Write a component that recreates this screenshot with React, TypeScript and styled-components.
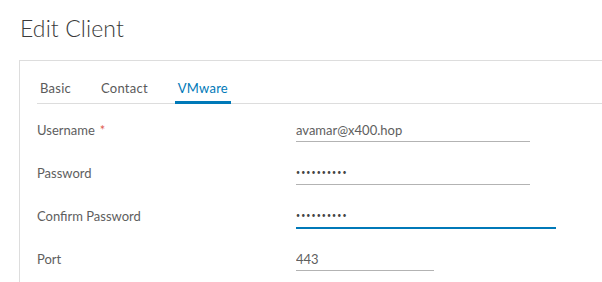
import React from 'react'
import styled, { createGlobalStyle } from 'styled-components'

const GlobalStyle = createGlobalStyle`
  html,
  body {
    margin: 0;
    padding: 0;
    background: #fff;
    overflow: hidden;
  }
  body {
    font-family: Lato, 'Open Sans', sans-serif;
    color: #565656;
  }
`

type Field = {
  label: string
  value: string
  type: 'text' | 'password'
  width: number
  required?: boolean
  focused?: boolean
}

const fields: Field[] = [
  { label: 'Username', value: 'avamar@x400.hop', type: 'text', width: 234, required: true },
  { label: 'Password', value: 'abcdefghij', type: 'password', width: 234 },
  { label: 'Confirm Password', value: 'abcdefghij', type: 'password', width: 260, focused: true },
  { label: 'Port', value: '443', type: 'text', width: 138 },
]

const tabs = ['Basic', 'Contact', 'VMware']

export default function App() {
  return (
    <SPage>
      <GlobalStyle />
      <STitle>Edit Client</STitle>
      <SCard>
        <STabBar>
          {tabs.map((tab) => (
            <STab key={tab} $active={tab === 'VMware'}>
              {tab}
            </STab>
          ))}
        </STabBar>
        <SForm>
          {fields.map((f) => (
            <SRow key={f.label}>
              <SLabel>
                {f.label}
                {f.required && <SRequired>*</SRequired>}
              </SLabel>
              <SInput
                type={f.type}
                defaultValue={f.value}
                readOnly
                $width={f.width}
                $focused={!!f.focused}
                $secret={f.type === 'password'}
              />
            </SRow>
          ))}
        </SForm>
      </SCard>
    </SPage>
  )
}

const SPage = styled.div`
  padding: 12px 0 0 19px;
  width: 640px;
`

const STitle = styled.h1`
  margin: 0 0 0 1px;
  font-family: Lato, sans-serif;
  font-weight: 300;
  font-size: 23px;
  line-height: 32px;
  letter-spacing: 0.1px;
  color: #3a3a3a;
`

const SCard = styled.div`
  margin-top: 16px;
  border: 1px solid #ddd;
  border-right: none;
  padding: 19px 0 40px 17px;
`

const STabBar = styled.div`
  display: flex;
  gap: 24px;
  border-bottom: 1px solid #ddd;
`

const STab = styled.button<{ $active: boolean }>`
  margin-bottom: -1px;
  padding: 0 3px 8px;
  border: none;
  background: none;
  font-family: Lato, sans-serif;
  font-size: 13px;
  line-height: 16px;
  letter-spacing: 0.25px;
  color: ${(p) => (p.$active ? '#0079b8' : '#5a5a5a')};
  box-shadow: ${(p) => (p.$active ? 'inset 0 -3px 0 #0079b8' : 'none')};
  cursor: pointer;
`

const SForm = styled.div`
  padding-top: 14px;
  display: flex;
  flex-direction: column;
  gap: 19px;
`

const SRow = styled.div`
  display: flex;
  align-items: center;
  height: 24px;
`

const SLabel = styled.label`
  width: 259px;
  flex: none;
  font-size: 13px;
  color: #5e5e5e;
`

const SRequired = styled.span`
  margin-left: 5px;
  color: #e0604f;
`

const SInput = styled.input<{ $width: number; $focused: boolean; $secret: boolean }>`
  box-sizing: border-box;
  width: ${(p) => p.$width}px;
  height: ${(p) => (p.$focused ? 25 : 24)}px;
  margin-bottom: ${(p) => (p.$focused ? -1 : 0)}px;
  padding: ${(p) => (p.$secret ? '0 0 2px' : '0')};
  border: none;
  border-bottom: ${(p) => (p.$focused ? '2px solid #0079b8' : '1px solid #b3b3b3')};
  outline: none;
  background: transparent;
  font-family: Lato, sans-serif;
  font-size: ${(p) => (p.$secret ? '7px' : '13px')};
  letter-spacing: ${(p) => (p.$secret ? '1.1px' : '0')};
  color: ${(p) => (p.$secret ? '#444' : '#5e5e5e')};
`
